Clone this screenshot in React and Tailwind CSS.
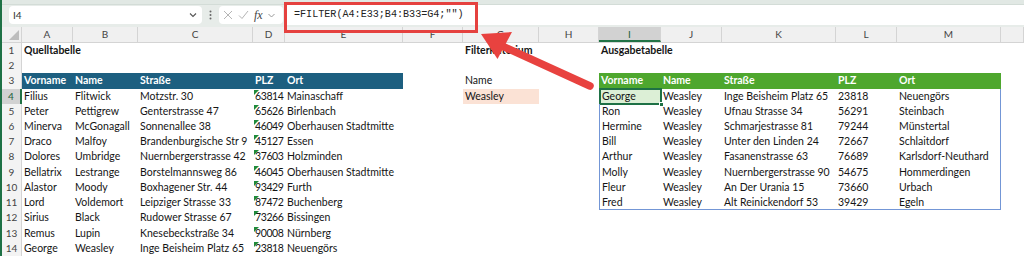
import React from 'react';

const COLS = [
  { k: 'A', w: 'w-[51px]' },
  { k: 'B', w: 'w-[65px]' },
  { k: 'C', w: 'w-[115px]' },
  { k: 'D', w: 'w-[32px]' },
  { k: 'E', w: 'w-[118px]' },
  { k: 'F', w: 'w-[60px]' },
  { k: 'G', w: 'w-[76px]' },
  { k: 'H', w: 'w-[60px]' },
  { k: 'I', w: 'w-[62px]' },
  { k: 'J', w: 'w-[61px]' },
  { k: 'K', w: 'w-[114px]' },
  { k: 'L', w: 'w-[61px]' },
  { k: 'M', w: 'w-[104px]' },
  { k: 'N', w: 'w-[23px]' },
];

const source = [
  ['Filius', 'Flitwick', 'Motzstr. 30', '63814', 'Mainaschaff'],
  ['Peter', 'Pettigrew', 'Genterstrasse 47', '65626', 'Birlenbach'],
  ['Minerva', 'McGonagall', 'Sonnenallee 38', '46049', 'Oberhausen Stadtmitte'],
  ['Draco', 'Malfoy', 'Brandenburgische Str 9', '45127', 'Essen'],
  ['Dolores', 'Umbridge', 'Nuernbergerstrasse 42', '37603', 'Holzminden'],
  ['Bellatrix', 'Lestrange', 'Borstelmannsweg 86', '46045', 'Oberhausen Stadtmitte'],
  ['Alastor', 'Moody', 'Boxhagener Str. 44', '93429', 'Furth'],
  ['Lord', 'Voldemort', 'Leipziger Strasse 33', '87472', 'Buchenberg'],
  ['Sirius', 'Black', 'Rudower Strasse 67', '73266', 'Bissingen'],
  ['Remus', 'Lupin', 'Knesebeckstraße 34', '90008', 'Nürnberg'],
  ['George', 'Weasley', 'Inge Beisheim Platz 65', '23818', 'Neuengörs'],
];

const output = [
  ['George', 'Weasley', 'Inge Beisheim Platz 65', '23818', 'Neuengörs'],
  ['Ron', 'Weasley', 'Ufnau Strasse 34', '56291', 'Steinbach'],
  ['Hermine', 'Weasley', 'Schmarjestrasse 81', '79244', 'Münstertal'],
  ['Bill', 'Weasley', 'Unter den Linden 24', '72667', 'Schlaitdorf'],
  ['Arthur', 'Weasley', 'Fasanenstrasse 63', '76689', 'Karlsdorf-Neuthard'],
  ['Molly', 'Weasley', 'Nuernbergerstrasse 90', '54675', 'Hommerdingen'],
  ['Fleur', 'Weasley', 'An Der Urania 15', '73660', 'Urbach'],
  ['Fred', 'Weasley', 'Alt Reinickendorf 53', '39429', 'Egeln'],
];

const header = ['Vorname', 'Name', 'Straße', 'PLZ', 'Ort'];
const srcKeys = ['A', 'B', 'C', 'D', 'E'];
const outKeys = ['I', 'J', 'K', 'L', 'M'];

function cellData(r, k) {
  const d = { text: '', cls: '' };
  if (r === 1) {
    if (k === 'A') return { text: 'Quelltabelle', cls: 'font-bold' };
    if (k === 'G') return { text: 'Filterkriterium', cls: 'font-bold' };
    if (k === 'I') return { text: 'Ausgabetabelle', cls: 'font-bold' };
  }
  if (r === 3) {
    const si = srcKeys.indexOf(k);
    if (si >= 0) return { text: header[si], cls: 'bg-[#1d5f80] text-white font-bold' };
    const oi = outKeys.indexOf(k);
    if (oi >= 0) return { text: header[oi], cls: 'bg-[#4ea72e] text-white font-bold' };
    if (k === 'G') return { text: 'Name', cls: '' };
  }
  if (r >= 4) {
    const si = srcKeys.indexOf(k);
    if (si >= 0 && source[r - 4]) {
      return { text: source[r - 4][si], cls: k === 'D' ? 'tracking-[-0.4px]' : '', tri: k === 'D' };
    }
    const oi = outKeys.indexOf(k);
    if (oi >= 0 && r <= 11) {
      let cls = '';
      if (k === 'I') cls += ' border-l border-l-[#7396d6]';
      if (k === 'M') cls += ' border-r border-r-[#7396d6]';
      if (r === 11) cls += ' border-b border-b-[#7396d6]';
      if (r === 4 && k === 'I') cls += ' bg-[#dcefd6]';
      return { text: output[r - 4][oi], cls, selected: r === 4 && k === 'I' };
    }
    if (r === 4 && k === 'G') return { text: 'Weasley', cls: 'bg-[#fbe2d5]' };
  }
  return d;
}

function Row({ r }) {
  const active = r === 4;
  return (
    <div className="flex h-[15.23px]">
      <div
        className={
          active
            ? 'w-[20px] shrink-0 bg-[#d2d2d2] border-r-2 border-r-[#217346] text-[#1e5e3a] text-[10px] leading-[15px] text-center'
            : 'w-[20px] shrink-0 bg-[#f3f3f3] border-r border-r-[#d4d4d4] text-[#444] text-[10px] leading-[15px] text-center'
        }
      >
        {r}
      </div>
      {COLS.map((c) => {
        const d = cellData(r, c.k);
        return (
          <div
            key={c.k}
            className={`${c.w} shrink-0 relative whitespace-nowrap pl-[2px] text-[10.5px] leading-[15.5px] text-[#151515] ${d.cls}`}
          >
            {d.tri && (
              <svg className="absolute left-[1px] top-[1px]" width="5" height="5" viewBox="0 0 5 5">
                <polygon points="0,0 5,0 0,5" fill="#1f8a3a" />
              </svg>
            )}
            {d.text}
            {d.selected && (
              <>
                <div className="absolute -left-[1px] -top-[1px] -right-[1px] -bottom-[1px] border-2 border-[#1e7145]" />
                <div className="absolute -right-[3px] -bottom-[3px] w-[5px] h-[5px] bg-[#1e7145] border border-white" />
              </>
            )}
          </div>
        );
      })}
    </div>
  );
}

export default function App() {
  const rows = [];
  for (let r = 1; r <= 14; r++) rows.push(r);

  return (
    <div className="relative w-[1024px] h-[256px] overflow-hidden bg-white font-[Lato,sans-serif]">
      <div className="flex h-full">
        <div className="w-[2px] shrink-0 bg-[#1e7145]" />
        <div className="flex-1 flex flex-col">
          {/* formula bar */}
          <div className="h-[31px] bg-[#e7ece9] flex flex-col">
            <div className="h-[5px] bg-[#e1e8e4] border-b border-b-[#d3dcd7]" />
            <div className="flex items-start h-[21px]">
              <div className="ml-[7px] mt-[1px] w-[193px] h-[18px] bg-white rounded-[4px] flex items-center justify-between pl-[4px] pr-[5px]">
                <span className="text-[10px] text-[#333]">I4</span>
                <svg width="8" height="6" viewBox="0 0 8 6">
                  <path d="M1 1.5 L4 4.5 L7 1.5" stroke="#555" strokeWidth="1.1" fill="none" />
                </svg>
              </div>
              <div className="w-[17px] h-[20px] flex items-center justify-center">
                <svg width="3" height="10" viewBox="0 0 3 10">
                  <circle cx="1.5" cy="1.5" r="1" fill="#666" />
                  <circle cx="1.5" cy="5" r="1" fill="#666" />
                  <circle cx="1.5" cy="8.5" r="1" fill="#666" />
                </svg>
              </div>
              <div className="mt-[1px] w-[64px] h-[18px] bg-white rounded-[4px] flex items-center pl-[4px] gap-[5px]">
                <svg width="10" height="10" viewBox="0 0 10 10">
                  <path d="M1 1 L9 9 M9 1 L1 9" stroke="#b5b5b5" strokeWidth="1" fill="none" />
                </svg>
                <svg width="11" height="10" viewBox="0 0 11 10">
                  <path d="M1 5.5 L4 8.5 L10 1" stroke="#b5b5b5" strokeWidth="1" fill="none" />
                </svg>
                <span className="font-['Liberation_Serif',serif] italic text-[12px] leading-none text-[#444]">fx</span>
                <svg width="7" height="5" viewBox="0 0 7 5">
                  <path d="M0.5 1 L3.5 4 L6.5 1" stroke="#999" strokeWidth="1" fill="none" />
                </svg>
              </div>
              <div className="ml-[2px] flex-1 h-[20px] bg-white flex items-center pl-[9px]">
                <span className="font-['Liberation_Mono',monospace] text-[10.1px] text-[#222]">=FILTER(A4:E33;B4:B33=G4;"")</span>
              </div>
            </div>
          </div>
          {/* column headers */}
          <div className="flex h-[16.4px] bg-[#f0f0f0] border-b border-b-[#d4d4d4]">
            <div className="w-[20px] shrink-0 relative border-r border-r-[#d4d4d4]">
              <svg className="absolute right-[2px] bottom-[2px]" width="10" height="10" viewBox="0 0 10 10">
                <polygon points="10,0 10,10 0,10" fill="#bdbdbd" />
              </svg>
            </div>
            {COLS.map((c) => (
              <div
                key={c.k}
                className={
                  c.k === 'I'
                    ? `${c.w} shrink-0 bg-[#d2d2d2] border-r border-r-[#d4d4d4] border-b-2 border-b-[#217346] text-center text-[10px] leading-[15px] text-[#1e5e3a]`
                    : `${c.w} shrink-0 border-r border-r-[#d4d4d4] text-center text-[10px] leading-[15px] text-[#444]`
                }
              >
                {c.k === 'N' ? '' : c.k}
              </div>
            ))}
          </div>
          {rows.map((r) => (
            <Row key={r} r={r} />
          ))}
        </div>
      </div>

      {/* highlight box around formula */}
      <div className="absolute left-[284px] top-[2px] w-[194px] h-[31px] border-[3px] border-[#e5413f]" />

      {/* arrow */}
      <svg className="absolute left-0 top-0 pointer-events-none" width="1024" height="256" viewBox="0 0 1024 256">
        <line x1="590" y1="86" x2="500" y2="45" stroke="#e8423f" strokeWidth="7.5" strokeLinecap="round" />
        <polygon points="481,34 497.5,59 512,32" fill="#e8423f" />
      </svg>
    </div>
  );
}
